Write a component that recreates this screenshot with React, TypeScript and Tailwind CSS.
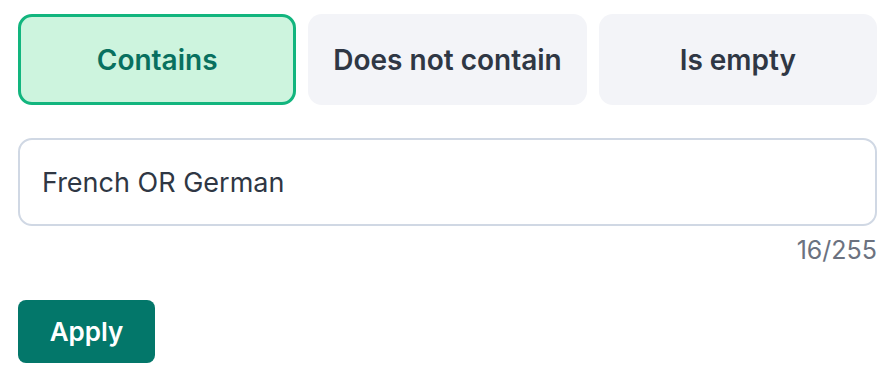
import React, { useState } from 'react';

const OPTIONS = ['Contains', 'Does not contain', 'Is empty'];

export default function App() {
  const [mode, setMode] = useState('Contains');
  const [value, setValue] = useState('French OR German');

  return (
    <div className="w-[892px] h-[378px] bg-white pl-[18px] pr-[15px] pt-[14px]" style={{ fontFamily: 'Inter, "Noto Sans", sans-serif' }}>
      <div className="grid grid-cols-3 gap-[12px]">
        {OPTIONS.map((o) => (
          <button
            key={o}
            type="button"
            onClick={() => setMode(o)}
            className={`h-[91px] rounded-[14px] text-[28px] font-semibold ${
              mode === o
                ? 'bg-[#cdf4de] border-[3px] border-[#12b57e] text-[#08705f]'
                : 'bg-[#f3f4f8] text-[#2f3744]'
            }`}
          >
            {o}
          </button>
        ))}
      </div>

      <input
        type="text"
        value={value}
        maxLength={255}
        onChange={(e) => setValue(e.target.value)}
        className="mt-[33px] w-full h-[88px] rounded-[14px] border-2 border-[#d0d8e4] px-[22px] text-[27px] text-[#2f3744] outline-none"
      />
      <div className="mt-[9px] text-right text-[25px] leading-[30px] text-[#6b7280]">
        {value.length}/255
      </div>

      <button
        type="button"
        className="mt-[35px] w-[137px] h-[63px] rounded-[8px] bg-[#03776a] text-white text-[26px] font-semibold"
      >
        Apply
      </button>
    </div>
  );
}
